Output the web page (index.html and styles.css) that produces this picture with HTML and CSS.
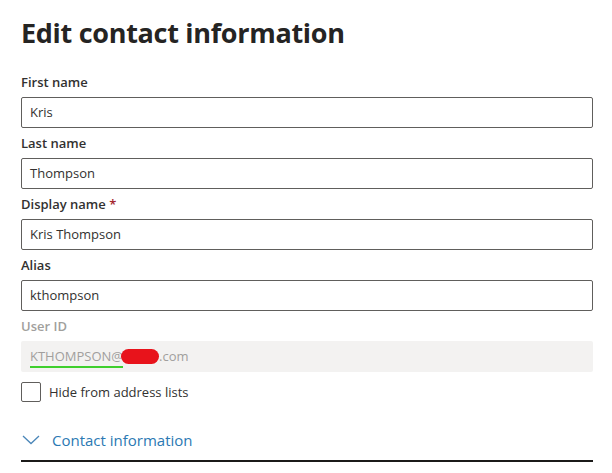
FILE: index.html
```html
<!DOCTYPE html>
<html>
<head>
<meta charset="utf-8">
<link rel="stylesheet" href="styles.css">
</head>
<body>
<div class="page">
  <h1 class="title">Edit contact information</h1>
  <div class="field">
    <div class="label">First name</div>
    <div class="input">Kris</div>
  </div>
  <div class="field">
    <div class="label">Last name</div>
    <div class="input">Thompson</div>
  </div>
  <div class="field">
    <div class="label">Display name <span class="req">*</span></div>
    <div class="input">Kris Thompson</div>
  </div>
  <div class="field">
    <div class="label">Alias</div>
    <div class="input">kthompson</div>
  </div>
  <div class="field">
    <div class="label disabled">User ID</div>
    <div class="input input-disabled"><span class="hl">KTHOMPSON@</span><span class="redact"></span>.com</div>
  </div>
  <label class="check">
    <span class="box"></span>
    <span class="check-text">Hide from address lists</span>
  </label>
  <div class="section">
    <svg class="chev" width="18" height="10" viewBox="0 0 18 10"><path d="M1 1 L9 8.5 L17 1" fill="none" stroke="#4a86b8" stroke-width="1.3"/></svg>
    <span class="section-text">Contact information</span>
  </div>
  <div class="rule"></div>
</div>
</body>
</html>
```
FILE: styles.css
```css
html, body {
  margin: 0;
  padding: 0;
  background: #ffffff;
}
body {
  font-family: "Open Sans", "Noto Sans", sans-serif;
  color: #323130;
}
.page {
  padding: 15px 19px 0 21px;
  display: flex;
  flex-direction: column;
}
.title {
  margin: 0 0 16px 0;
  font-size: 27px;
  line-height: 36px;
  font-weight: 700;
  color: #252423;
  letter-spacing: -0.3px;
}
.field {
  display: flex;
  flex-direction: column;
}
.label {
  font-size: 13px;
  font-weight: 600;
  line-height: 20px;
  padding: 5px 0;
  color: #323130;
}
.label.disabled {
  color: #a19f9d;
}
.req {
  color: #a4262c;
}
.input {
  height: 31px;
  box-sizing: border-box;
  border: 1px solid #605e5c;
  border-radius: 2px;
  padding: 0 8px;
  font-size: 13px;
  line-height: 29px;
  color: #323130;
}
.input-disabled {
  border-color: transparent;
  background: #f3f2f1;
  color: #a19f9d;
}
.hl {
  text-decoration: underline;
  text-decoration-color: #3fcf2d;
  text-decoration-thickness: 2px;
  text-underline-offset: 5px;
}
.redact {
  display: inline-block;
  width: 38px;
  height: 15px;
  background: #e8131b;
  border-radius: 8px;
  vertical-align: -3px;
  margin-left: -2px;
}
.check {
  display: flex;
  align-items: center;
  margin-top: 10px;
  height: 20px;
}
.box {
  width: 20px;
  height: 20px;
  box-sizing: border-box;
  border: 1px solid #605e5c;
  border-radius: 2px;
}
.check-text {
  margin-left: 8px;
  font-size: 13px;
  color: #323130;
}
.section {
  display: flex;
  align-items: center;
  margin-top: 28px;
  height: 20px;
}
.chev {
  margin-left: 1px;
}
.section-text {
  margin-left: 12px;
  font-size: 15px;
  color: #2b79b3;
}
.rule {
  margin-top: 10px;
  height: 2px;
  background: #1b1a19;
}
```
